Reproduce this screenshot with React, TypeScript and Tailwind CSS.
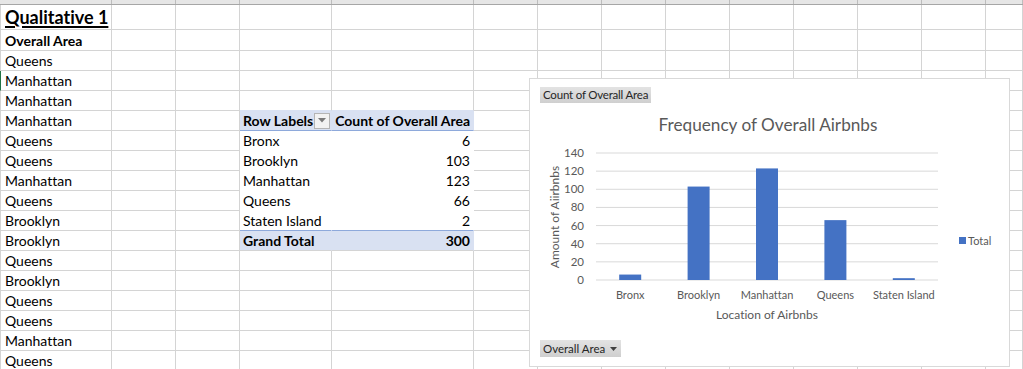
import React from 'react';

const COLS = [
  'w-[112px] border-l',
  'w-[64px]',
  'w-[64px]',
  'w-[92px]',
  'w-[142px]',
  'w-[64px]',
  'w-[64px]',
  'w-[64px]',
  'w-[64px]',
  'w-[64px]',
  'w-[64px]',
  'w-[64px]',
  'w-[64px]',
  'flex-1',
];

const areas = [
  'Queens', 'Manhattan', 'Manhattan', 'Manhattan', 'Queens', 'Queens', 'Manhattan', 'Queens',
  'Brooklyn', 'Brooklyn', 'Queens', 'Brooklyn', 'Queens', 'Queens', 'Manhattan', 'Queens',
];

const pivot = [
  { label: 'Bronx', count: 6 },
  { label: 'Brooklyn', count: 103 },
  { label: 'Manhattan', count: 123 },
  { label: 'Queens', count: 66 },
  { label: 'Staten Island', count: 2 },
];

const FilterButton = () => (
  <span className="w-[16px] h-[16px] border border-[#b4b4b4] bg-[#f2f2f2] flex items-center justify-center">
    <svg width="8" height="5" viewBox="0 0 8 5">
      <path d="M0 0 L8 0 L4 4.5 Z" fill="#7a7a7a" />
    </svg>
  </span>
);

// one spreadsheet cell; r = 1-based row, c = 0-based column
const Cell = ({ r, c }: { r: number; c: number }) => {
  let cls = 'border-r border-b border-[#d4d4d4] flex items-center px-[4px] whitespace-nowrap overflow-visible ';
  let content: React.ReactNode = null;

  if (c === 0) {
    if (r === 1) {
      cls += 'items-end pb-[3px] ';
      content = <span className="text-[18px] font-bold underline underline-offset-[2px] decoration-[1.5px] leading-none">Qualitative 1</span>;
    } else if (r === 2) {
      content = <span className="font-bold">Overall Area</span>;
    } else {
      content = areas[r - 3];
    }
    if (r === 4) cls += 'border-l-[#217346] ';
  }

  const inPivot = (c === 3 || c === 4) && r >= 6 && r <= 12;
  if ((c === 3 || c === 4) && r === 5) cls += 'border-b-[#d9e1f2] ';

  if (inPivot) {
    if (r === 6 || r === 12) cls += 'bg-[#d9e1f2] border-r-[#d9e1f2] font-bold ';
    else cls += 'border-r-white ';
    if (r === 6 || r === 11) cls += 'border-b-[#8ea9db] ';
    else if (r < 11) cls += 'border-b-white ';
    if (c === 4) cls += 'justify-end pr-[3px] ';
    else cls += 'pl-[3px] ';

    if (r === 6) {
      if (c === 3) {
        cls += 'justify-between pr-[1px] ';
        content = (
          <>
            <span>Row Labels</span>
            <FilterButton />
          </>
        );
      } else {
        content = 'Count of Overall Area';
      }
    } else if (r === 12) {
      content = c === 3 ? 'Grand Total' : '300';
    } else {
      const p = pivot[r - 7];
      content = c === 3 ? p.label : p.count;
    }
  }

  return <div className={`${COLS[c]} ${cls}`}>{content}</div>;
};

const rowHeight = (r: number) => (r === 1 ? 'h-[25px]' : r === 2 ? 'h-[21px]' : 'h-[20px]');

const data = [6, 103, 123, 66, 2];
const cats = ['Bronx', 'Brooklyn', 'Manhattan', 'Queens', 'Staten Island'];
const ticks = [0, 20, 40, 60, 80, 100, 120, 140];

const Chart = () => {
  const x0 = 66;
  const x1 = 408;
  const y0 = 177;
  const scale = 127 / 140;
  const step = (x1 - x0) / 5;
  return (
    <div className="absolute left-[529px] top-[78px] w-[481px] h-[289px] bg-white border border-[#d9d9d9] flex flex-col">
      <div className="mt-[8px] ml-[10px] self-start h-[16px] px-[3px] flex items-center bg-gradient-to-b from-[#e3e3e3] to-[#cfcfcf] text-[11.5px] text-[#262626] tracking-[-0.2px]">
        Count of Overall Area
      </div>
      <svg width="479" height="237" className="block" style={{ fontFamily: 'Lato, sans-serif' }}>
        <text x="238" y="28" textAnchor="middle" fontSize="17.2" fill="#595959">
          Frequency of Overall Airbnbs
        </text>
        {ticks.map((t) => {
          const y = y0 - t * scale;
          return (
            <g key={t}>
              <line x1={x0} x2={x1} y1={y} y2={y} stroke="#d9d9d9" strokeWidth="1" />
              <text x="54" y={y + 4} textAnchor="end" fontSize="11.5" fill="#595959">
                {t}
              </text>
            </g>
          );
        })}
        <text
          transform="translate(29 114) rotate(-90)"
          textAnchor="middle"
          fontSize="12"
          fill="#595959"
        >
          Amount of Aiirbnbs
        </text>
        {data.map((v, i) => {
          const cx = x0 + step * (i + 0.5);
          const h = v * scale;
          return <rect key={i} x={cx - 11} y={y0 - h} width="22" height={h} fill="#4472c4" />;
        })}
        {cats.map((c, i) => (
          <text key={c} x={x0 + step * (i + 0.5)} y="196" textAnchor="middle" fontSize="11" fill="#595959">
            {c}
          </text>
        ))}
        <text x="237" y="216" textAnchor="middle" fontSize="12" fill="#595959">
          Location of Airbnbs
        </text>
        <rect x="429" y="134" width="7" height="7" fill="#4472c4" />
        <text x="438" y="141.5" fontSize="11" fill="#595959">
          Total
        </text>
      </svg>
      <div className="ml-[10px] self-start h-[17px] pl-[3px] pr-[4px] flex items-center gap-[5px] bg-gradient-to-b from-[#e3e3e3] to-[#cfcfcf] text-[11.5px] text-[#262626]">
        Overall Area
        <svg width="7" height="4" viewBox="0 0 7 4">
          <path d="M0 0 L7 0 L3.5 4 Z" fill="#404040" />
        </svg>
      </div>
    </div>
  );
}

export default function App() {
  const rows = Array.from({ length: 18 }, (_, i) => i + 1);
  return (
    <div className="relative w-[1023px] h-[369px] overflow-hidden bg-white text-black text-[14px] [font-variant-ligatures:none] font-['Lato',sans-serif]">
      <div className="flex h-[5px] bg-[#e6e6e6] border-b border-[#a6a6a6]">
        {COLS.map((c, i) => (
          <div key={i} className={`${c.replace(' border-l', '')} border-r border-[#bdbdbd]`} />
        ))}
      </div>
      {rows.map((r) => (
        <div key={r} className={`flex ${rowHeight(r)}`}>
          {COLS.map((_, c) => (
            <Cell key={c} r={r} c={c} />
          ))}
        </div>
      ))}
      <Chart />
    </div>
  );
}
